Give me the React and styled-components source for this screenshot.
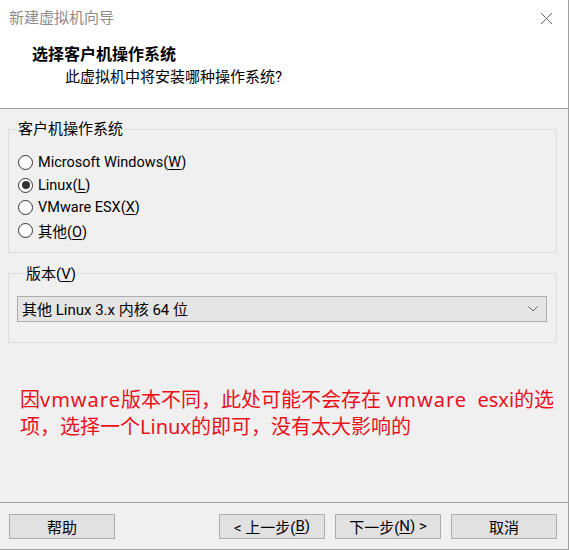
import React from "react";
import styled, { createGlobalStyle } from "styled-components";

const Global = createGlobalStyle`
  html, body { margin: 0; padding: 0; background: #f0f0f0; }
  body { font-family: Roboto, "Noto Sans CJK SC", sans-serif; }
  * { box-sizing: border-box; }
`;

const FONT = `Roboto, "Noto Sans CJK SC", sans-serif`;

const Window = styled.div`
  width: 569px;
  height: 550px;
  background: #f0f0f0;
  border-right: 1px solid #a0a0a0;
  border-bottom: 1px solid #a0a0a0;
  display: flex;
  flex-direction: column;
  font-family: ${FONT};
  font-size: 15px;
  color: #000;
`;

const Header = styled.div`
  background: #fff;
  height: 109px;
  border-bottom: 1px solid #a0a0a0;
  display: flex;
  flex-direction: column;
`;

const TitleBar = styled.div`
  height: 36px;
  display: flex;
  align-items: center;
  justify-content: space-between;
  padding: 0 15px 0 9px;
`;

const TitleText = styled.span`
  color: #8c8c8c;
  font-size: 15px;
  line-height: 20px;
`;

const Heading = styled.div`
  font-weight: bold;
  font-size: 16px;
  line-height: 20px;
  padding-left: 32px;
  margin-top: 9px;
`;

const SubTitle = styled.div`
  font-size: 15px;
  line-height: 20px;
  padding-left: 65px;
  margin-top: 2px;
`;

const Body = styled.div`
  flex: 1;
  display: flex;
  flex-direction: column;
  padding: 10px 11px 0 8px;
`;

const Group = styled.fieldset`
  margin: 0 0 ${(p) => p.$mb || 0}px 0;
  padding: ${(p) => p.$pad};
  border: 1px solid #dcdcdc;
  min-width: 0;
`;

const Legend = styled.legend`
  margin-left: 8px;
  padding: 0 1px;
  font-size: 15px;
  line-height: 20px;
`;

const RadioRow = styled.label`
  height: 22.7px;
  display: flex;
  align-items: center;
  gap: 5px;
  padding-left: 9px;
  font-size: 14.5px;
`;

const RadioCircle = styled.span`
  width: 15px;
  height: 15px;
  border-radius: 50%;
  border: 1px solid #333;
  background: #fff;
  display: flex;
  align-items: center;
  justify-content: center;
  flex-shrink: 0;
  &::after {
    content: "";
    width: 8px;
    height: 8px;
    border-radius: 50%;
    background: ${(p) => (p.$on ? "#333" : "transparent")};
  }
`;

const U = styled.span`
  text-decoration: underline;
  text-underline-offset: 2px;
`;

const Select = styled.div`
  height: 26px;
  background: #e5e5e5;
  border: 1px solid #adadad;
  display: flex;
  align-items: center;
  justify-content: space-between;
  padding: 0 8px 0 4px;
  font-size: 15px;
`;

const Note = styled.div`
  margin-top: 43px;
  padding-left: 12px;
  color: #e8111c;
  font-size: 20px;
  line-height: 27px;
  font-family: "Noto Sans", "Noto Sans CJK SC", sans-serif;
  white-space: pre;
`;

const Wide = styled.span`
  letter-spacing: 1px;
`;

const Footer = styled.div`
  height: 47px;
  border-top: 1px solid #a0a0a0;
  display: flex;
  align-items: center;
  padding: 0 11px 0 9px;
  gap: 10px;
`;

const Button = styled.button`
  width: 106px;
  height: 25px;
  background: #e1e1e1;
  border: 1px solid #adadad;
  font-family: ${FONT};
  font-size: 15px;
  color: #000;
  padding: 0;
  display: flex;
  align-items: center;
  justify-content: center;
  margin-left: ${(p) => p.$ml || 0}px;
`;

const Close = () => (
  <svg width="13" height="13" viewBox="0 0 13 13">
    <path d="M1 1 L12 12 M12 1 L1 12" stroke="#666" strokeWidth="1" fill="none" />
  </svg>
);

const Chevron = () => (
  <svg width="10" height="6" viewBox="0 0 10 6">
    <path d="M0.5 0.5 L5 5 L9.5 0.5" stroke="#666" strokeWidth="1" fill="none" />
  </svg>
);

const radios = [
  { pre: "Microsoft Windows(", key: "W", on: false },
  { pre: "Linux(", key: "L", on: true },
  { pre: "VMware ESX(", key: "X", on: false },
  { pre: "其他(", key: "O", on: false },
];

export default function App() {
  return (
    <>
      <Global />
      <Window>
        <Header>
          <TitleBar>
            <TitleText>新建虚拟机向导</TitleText>
            <Close />
          </TitleBar>
          <Heading>选择客户机操作系统</Heading>
          <SubTitle>此虚拟机中将安装哪种操作系统?</SubTitle>
        </Header>
        <Body>
          <Group $pad="12px 0 10px 0" $mb={11}>
            <Legend>客户机操作系统</Legend>
            {radios.map((r) => (
              <RadioRow key={r.key}>
                <RadioCircle $on={r.on} />
                <span>
                  {r.pre}
                  <U>{r.key}</U>)
                </span>
              </RadioRow>
            ))}
          </Group>
          <Group $pad="12px 9px 20px 8px">
            <Legend>
              版本(<U>V</U>)
            </Legend>
            <Select>
              <span>其他 Linux 3.x 内核 64 位</span>
              <Chevron />
            </Select>
          </Group>
          <Note>
            因<Wide>vmware</Wide>版本不同，此处可能不会存在 <Wide>vmware</Wide>{"  esxi的选"}
            <br />
            项，选择一个Linux的即可，没有太大影响的
          </Note>
        </Body>
        <Footer>
          <Button>帮助</Button>
          <Button $ml={94}>
            &lt; 上一步(<U>B</U>)
          </Button>
          <Button>
            下一步(<U>N</U>) &gt;
          </Button>
          <Button>取消</Button>
        </Footer>
      </Window>
    </>
  );
}
